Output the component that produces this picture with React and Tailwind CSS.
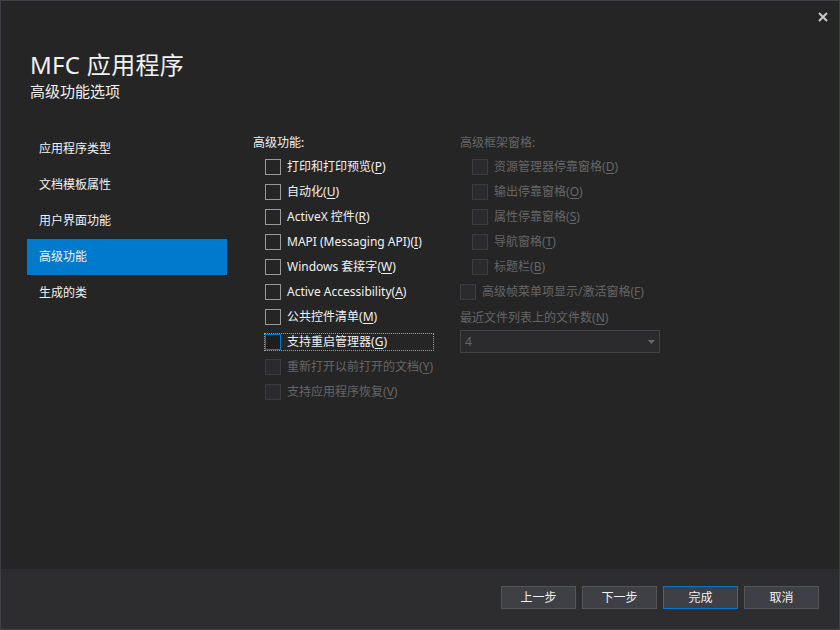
import React from 'react';

const FONT = { fontFamily: '"Noto Sans", "Noto Sans CJK SC", sans-serif' };

const navItems = ['应用程序类型', '文档模板属性', '用户界面功能', '高级功能', '生成的类'];

const features = [
  { label: '打印和打印预览', key: 'P' },
  { label: '自动化', key: 'U' },
  { label: 'ActiveX 控件', key: 'R' },
  { label: 'MAPI (Messaging API)', key: 'I' },
  { label: 'Windows 套接字', key: 'W' },
  { label: 'Active Accessibility', key: 'A' },
  { label: '公共控件清单', key: 'M' },
  { label: '支持重启管理器', key: 'G', focused: true },
  { label: '重新打开以前打开的文档', key: 'Y', disabled: true },
  { label: '支持应用程序恢复', key: 'V', disabled: true },
];

const panes = [
  { label: '资源管理器停靠窗格', key: 'D' },
  { label: '输出停靠窗格', key: 'O' },
  { label: '属性停靠窗格', key: 'S' },
  { label: '导航窗格', key: 'T' },
  { label: '标题栏', key: 'B' },
];

function Accel({ label, k }) {
  return (
    <span className="whitespace-nowrap">
      {label}(<span className="underline underline-offset-2">{k}</span>)
    </span>
  );
}

function Box({ disabled, focused }) {
  let cls = 'border-[#999999] bg-[#252526]';
  if (disabled) cls = 'border-[#3c3c40] bg-[#2b2b2e]';
  if (focused) cls = 'border-[#007acc] bg-[#1e1e1e]';
  return <span className={`block w-[16px] h-[16px] border shrink-0 ${cls}`} />;
}

function CheckRow({ label, k, disabled, focused, indent = 'pl-[12px]' }) {
  const text = disabled ? 'text-[#656565]' : 'text-[#f1f1f1]';
  if (focused) {
    return (
      <div className={`h-[25px] flex items-center ${indent}`}>
        <div className="flex items-center w-[170px] h-[18px] border border-dotted border-[#a0a0a0] -ml-px">
          <Box focused />
          <span className={`ml-[6px] text-[12px] leading-[16px] ${text}`}>
            <Accel label={label} k={k} />
          </span>
        </div>
      </div>
    );
  }
  return (
    <div className={`h-[25px] flex items-center ${indent}`}>
      <Box disabled={disabled} />
      <span className={`ml-[6px] text-[12px] leading-[16px] ${text}`}>
        <Accel label={label} k={k} />
      </span>
    </div>
  );
}

export default function App() {
  return (
    <div
      className="w-[840px] h-[630px] bg-[#252526] border border-[#3f3f46] flex flex-col overflow-hidden"
      style={FONT}
    >
      {/* Title bar */}
      <div className="h-[30px] flex justify-end items-center pr-[11px] pt-[1px]">
        <svg width="10" height="10" viewBox="0 0 10 10">
          <path d="M1 1 L9 9 M9 1 L1 9" stroke="#c8c8c8" strokeWidth="2" />
        </svg>
      </div>

      {/* Heading */}
      <div className="pl-[29px] pt-[20px]">
        <div className="text-[24px] leading-[28px] text-[#f1f1f1] tracking-[0.3px]">MFC 应用程序</div>
        <div className="text-[15px] leading-[18px] text-[#f1f1f1] mt-[3px]">高级功能选项</div>
      </div>

      {/* Body */}
      <div className="flex-1 flex pt-[30px]">
        <nav className="w-[200px] ml-[26px] mt-[1px] flex flex-col">
          {navItems.map((item) => (
            <div
              key={item}
              className={`h-[36px] flex items-center pl-[12px] text-[12px] text-[#f1f1f1] ${
                item === '高级功能' ? 'bg-[#007acc]' : ''
              }`}
            >
              {item}
            </div>
          ))}
        </nav>

        <section className="ml-[26px] w-[207px] pt-[4px]">
          <div className="h-[18px] flex items-center text-[12px] text-[#f1f1f1]">高级功能:</div>
          <div className="mt-[2px]">
            {features.map((f) => (
              <CheckRow key={f.key} label={f.label} k={f.key} disabled={f.disabled} focused={f.focused} />
            ))}
          </div>
        </section>

        <section className="w-[200px] pt-[4px]">
          <div className="h-[18px] flex items-center text-[12px] text-[#656565]">高级框架窗格:</div>
          <div className="mt-[2px]">
            {panes.map((p) => (
              <CheckRow key={p.key} label={p.label} k={p.key} disabled />
            ))}
            <CheckRow label="高级帧菜单项显示/激活窗格" k="F" disabled indent="pl-0" />
          </div>
          <div className="mt-[5px] h-[18px] flex items-center text-[12px] text-[#656565]">
            <Accel label="最近文件列表上的文件数" k="N" />
          </div>
          <div className="mt-[3px] w-[200px] h-[23px] border border-[#434346] bg-[#2a2a2c] flex items-center justify-between pl-[4px] pr-[4px]">
            <span className="text-[12px] text-[#656565]">4</span>
            <svg width="7" height="4" viewBox="0 0 7 4">
              <path d="M0 0 L7 0 L3.5 4 Z" fill="#6a6a6a" />
            </svg>
          </div>
        </section>
      </div>

      {/* Footer */}
      <footer className="h-[60px] bg-[#2d2d30] flex items-center justify-end pr-[20px] gap-[6px] pb-[3px]">
        {['上一步', '下一步', '完成', '取消'].map((b) => (
          <button
            key={b}
            className={`w-[75px] h-[23px] bg-[#3f3f46] border text-[12px] leading-[16px] text-[#f1f1f1] ${
              b === '完成' ? 'border-[#007acc]' : 'border-[#555558]'
            }`}
          >
            {b}
          </button>
        ))}
      </footer>
    </div>
  );
}
